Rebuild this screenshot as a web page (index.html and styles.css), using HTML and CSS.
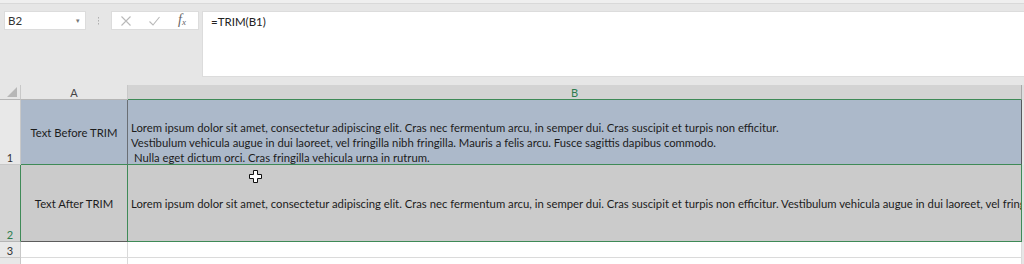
FILE: index.html
```html
<!DOCTYPE html>
<html>
<head>
<meta charset="utf-8">
<link rel="stylesheet" href="styles.css">
</head>
<body>
<div class="topstrip"></div>
<div class="fbar">
  <div class="namebox"><span>B2</span><span class="caret">&#9662;</span></div>
  <div class="sep"><i></i><i></i><i></i></div>
  <div class="fxbox">
    <svg class="ic" width="12" height="12" viewBox="0 0 12 12"><path d="M1.5 1.5 L10.5 10.5 M10.5 1.5 L1.5 10.5" stroke="#b9b9b9" stroke-width="1.1" fill="none"/></svg>
    <svg class="ic" width="13" height="12" viewBox="0 0 13 12"><path d="M1.5 6.5 L5 10 L11.5 2" stroke="#b9b9b9" stroke-width="1.1" fill="none"/></svg>
    <span class="fx">f<sub>x</sub></span>
  </div>
  <div class="formula">=TRIM(B1)</div>
</div>
<div class="sheet">
  <div class="corner"><span class="tri"></span></div>
  <div class="ch">A</div>
  <div class="ch chsel">B</div>
  <div class="edge edgehead"></div>

  <div class="rh rh1">1</div>
  <div class="c a1">Text Before TRIM</div>
  <div class="c b1"><div class="txt">Lorem ipsum dolor sit amet, consectetur adipiscing elit. Cras nec fermentum arcu, in semper dui. Cras suscipit et turpis non efficitur.<br>Vestibulum vehicula augue in dui laoreet, vel fringilla nibh fringilla. Mauris a felis arcu. Fusce sagittis dapibus commodo.<br>&nbsp;Nulla eget dictum orci. Cras fringilla vehicula urna in rutrum.</div></div>
  <div class="edge"></div>

  <div class="rh rh2">2</div>
  <div class="c a2">Text After TRIM</div>
  <div class="c b2"><span class="one">Lorem ipsum dolor sit amet, consectetur adipiscing elit. Cras nec fermentum arcu, in semper dui. Cras suscipit et turpis non efficitur. Vestibulum vehicula augue in dui laoreet, vel fringilla nibh fringilla. Mauris a felis arcu. Fusce sagittis dapibus commodo. Nulla eget dictum orci. Cras fringilla vehicula urna in rutrum.</span>
    <svg class="cursor" width="13" height="13" viewBox="0 0 13 13"><path d="M4.5 0.5 H8.5 V4.5 H12.5 V8.5 H8.5 V12.5 H4.5 V8.5 H0.5 V4.5 H4.5 Z" fill="#fff" stroke="#111" stroke-width="1"/></svg>
  </div>
  <div class="edge edge2"></div>

  <div class="rh rh3">3</div>
  <div class="c e"></div>
  <div class="c e"></div>
  <div class="edge"></div>

  <div class="rh rh4"></div>
  <div class="c e"></div>
  <div class="c e"></div>
  <div class="edge"></div>
</div>
</body>
</html>
```
FILE: styles.css
```css
* { box-sizing: border-box; }
html, body { margin: 0; padding: 0; }
body {
  width: 1024px;
  height: 264px;
  overflow: hidden;
  background: #e6e6e6;
  font-family: Lato, "Open Sans", sans-serif;
  color: #1c1c1c;
}
.topstrip {
  height: 4px;
  background: #efefef;
  border-bottom: 1px solid #d9d9d9;
}
.fbar {
  display: flex;
  align-items: flex-start;
  padding: 7px 0 0 4px;
  height: 81px;
}
.namebox {
  width: 82px;
  height: 19px;
  background: #fff;
  border: 1px solid #dcdcdc;
  display: flex;
  align-items: center;
  justify-content: space-between;
  padding: 0 5px 0 3px;
  font-size: 11.5px;
  color: #333;
}
.caret { font-size: 7px; color: #777; }
.sep {
  width: 25px;
  height: 19px;
  display: flex;
  flex-direction: column;
  align-items: center;
  justify-content: center;
  gap: 2px;
}
.sep i {
  display: block;
  width: 1px;
  height: 1px;
  background: #b0b0b0;
  box-shadow: 0 1px 0 #c8c8c8;
}
.fxbox {
  width: 88px;
  height: 19px;
  background: #fff;
  border: 1px solid #dcdcdc;
  display: flex;
  align-items: center;
  padding-left: 8px;
  gap: 16px;
}
.fx {
  font-family: "Liberation Serif", serif;
  font-style: italic;
  font-size: 14px;
  color: #666;
  margin-left: 1px;
  line-height: 14px;
}
.fx sub { font-size: 9px; vertical-align: -1px; }
.formula {
  margin-left: 3px;
  flex: 1;
  height: 66px;
  background: #fff;
  border: 1px solid #dcdcdc;
  border-right: none;
  padding: 3px 0 0 8px;
  font-size: 11.5px;
  color: #222;
}
.sheet {
  display: grid;
  grid-template-columns: 21px 107px 894px 2px;
  grid-template-rows: 15px 65px 77px 16px 15px;
  font-size: 11.3px;
}
.corner {
  background: #e6e6e6;
  border-right: 1px solid #c8c8c8;
  border-bottom: 1px solid #b5b5b5;
  position: relative;
}
.tri {
  position: absolute;
  right: 3px;
  bottom: 2px;
  width: 0;
  height: 0;
  border-left: 10px solid transparent;
  border-bottom: 10px solid #b7b7b7;
}
.ch {
  background: #e6e6e6;
  border-right: 1px solid #c8c8c8;
  border-bottom: 1px solid #b5b5b5;
  display: flex;
  align-items: center;
  justify-content: center;
  color: #444;
  font-size: 11px;
}
.chsel {
  background: #d3d3d3;
  color: #2e7d4f;
  border-right: 1px solid #a8a8a8;
  border-bottom: 1px solid #3f8a57;
}
.edge { background: #e6e6e6; }
.edgehead { background: #dedede; }
.edge2 { background: #e0e0e0; }
.rh {
  background: #e8e8e8;
  border-right: 1px solid #c8c8c8;
  border-bottom: 1px solid #c8c8c8;
  display: flex;
  align-items: flex-end;
  justify-content: center;
  padding-bottom: 0;
  color: #333;
  font-size: 11px;
}
.rh2 {
  background: #d4d4d4;
  color: #2e7d4f;
  border-right: 1px solid #3f8a57;
  border-bottom: 1px solid #b5b5b5;
}
.c { overflow: hidden; white-space: nowrap; }
.a1 {
  background: #acb9ca;
  border-right: 1px solid #6a6e74;
  border-bottom: 1px solid #3f8a57;
  display: flex;
  align-items: center;
  justify-content: center;
}
.b1 {
  background: #acb9ca;
  border-right: 1px solid #55595e;
  border-bottom: 1px solid #3f8a57;
  display: flex;
  align-items: flex-end;
  padding: 0 0 0 3px;
}
.txt { line-height: 15px; margin-bottom: -1px; }
.a2 {
  background: #cbcbcb;
  border-right: 1px solid #3f8a57;
  border-bottom: 1px solid #5d5d5d;
  display: flex;
  align-items: center;
  justify-content: center;
}
.b2 {
  background: #cbcbcb;
  border-right: 1px solid #3f8a57;
  border-bottom: 1px solid #3f8a57;
  display: flex;
  align-items: center;
  padding-left: 3px;
  position: relative;
}
.cursor {
  position: absolute;
  left: 121px;
  top: 5px;
}
.e {
  background: #fff;
  border-right: 1px solid #dadada;
  border-bottom: 1px solid #dadada;
}
```
